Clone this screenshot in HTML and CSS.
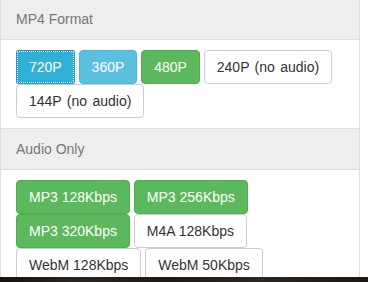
FILE: index.html
```html
<!DOCTYPE html>
<html>
<head>
<meta charset="utf-8">
<link rel="stylesheet" href="styles.css">
</head>
<body>
<div class="wrap">
  <div class="panel">
    <div class="panel-heading">MP4 Format</div>
    <div class="panel-body"><button class="btn btn-info focus">720P</button> <button class="btn btn-info">360P</button> <button class="btn btn-success">480P</button> <button class="btn btn-default btn-wide">240P (no audio)</button> <button class="btn btn-default btn-wide">144P (no audio)</button></div>
  </div>
  <div class="panel">
    <div class="panel-heading">Audio Only</div>
    <div class="panel-body"><button class="btn btn-success">MP3 128Kbps</button> <button class="btn btn-success">MP3 256Kbps</button> <button class="btn btn-success">MP3 320Kbps</button> <button class="btn btn-default">M4A 128Kbps</button> <button class="btn btn-default">WebM 128Kbps</button> <button class="btn btn-default">WebM 50Kbps</button></div>
  </div>
</div>
<div class="dark-bar"></div>
</body>
</html>
```
FILE: styles.css
```css
html, body {
  margin: 0;
  padding: 0;
  background: #fff;
  overflow: hidden;
}
body {
  font-family: "Liberation Sans", Arial, sans-serif;
  font-size: 14px;
  line-height: 20px;
  color: #333;
}
.wrap {
  width: 360px;
  margin-top: -2px;
}
.panel {
  border: 1px solid #ddd;
  background: #fff;
}
.panel + .panel {
  margin-top: -1px;
}
.panel-heading {
  background: #eeeeee;
  color: #777;
  padding: 10px 15px;
  border-bottom: 1px solid #ddd;
}
.panel-body {
  padding: 10px 15px;
}
.btn {
  display: inline-block;
  font-family: "Liberation Sans", Arial, sans-serif;
  font-size: 14px;
  line-height: 20px;
  padding: 6px 12px;
  margin: 0;
  border: 1px solid transparent;
  border-radius: 4px;
  vertical-align: middle;
  cursor: pointer;
}
.btn-wide {
  word-spacing: 1.5px;
}
.btn-info {
  color: #fff;
  background: #5bc0de;
  border-color: #46b8da;
}
.btn-info.focus {
  background: #31b0d5;
  border-color: #269abc;
  border-radius: 2px;
  outline: 1px dotted #fff;
  outline-offset: -2px;
}
.btn-success {
  color: #fff;
  background: #5cb85c;
  border-color: #4cae4c;
}
.btn-default {
  color: #333;
  background: #fff;
  border-color: #ccc;
}
.dark-bar {
  position: fixed;
  left: 0;
  right: 0;
  bottom: 0;
  height: 5px;
  background: linear-gradient(90deg, #15120f 0%, #2a251f 20%, #1d1a16 45%, #2b2620 70%, #1a1713 100%);
}
```
